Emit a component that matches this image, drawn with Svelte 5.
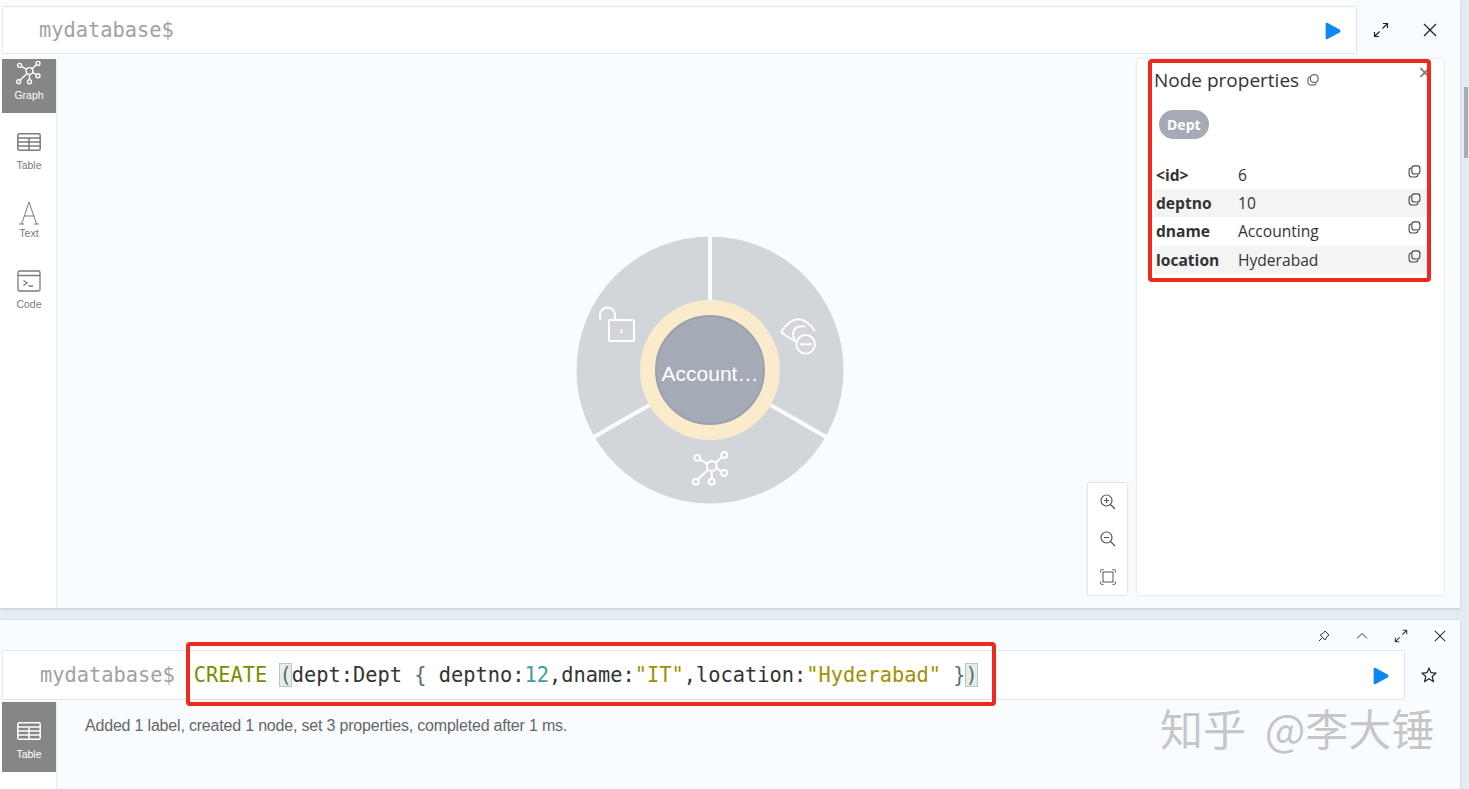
<script>
  // view tabs on the left of the result frame
  const views = [
    { id: 'graph', label: 'Graph', active: true },
    { id: 'table', label: 'Table' },
    { id: 'text', label: 'Text' },
    { id: 'code', label: 'Code' }
  ];

  const props = [
    { key: '<id>', value: '6' },
    { key: 'deptno', value: '10' },
    { key: 'dname', value: 'Accounting' },
    { key: 'location', value: 'Hyderabad' }
  ];
</script>

{#snippet copyIcon(size)}
  <svg class="copy" width={size} height={size} viewBox="0 0 12 12" fill="none" stroke="#444" stroke-width="1">
    <rect x="3.5" y="0.8" width="7.5" height="7.5" rx="2.4" />
    <path d="M3 2.8 A2.2 2.2 0 0 0 1 5 V8.6 A2.4 2.4 0 0 0 3.4 11 H7 A2.2 2.2 0 0 0 9.2 9" />
  </svg>
{/snippet}

{#snippet playIcon()}
  <svg width="16" height="18" viewBox="0 0 16 18"><path d="M.6 2 Q.6 .2 2.2 .8 L14.6 7.4 Q16.4 9 14.6 10.6 L2.2 17.2 Q.6 17.8 .6 16 Z" fill="#0b88f2" /></svg>
{/snippet}

{#snippet expandIcon()}
  <svg width="16" height="16" viewBox="0 0 16 16" fill="none" stroke="#222" stroke-width="1.2"><path d="M9.5 6.5 L14.5 1.5 M10 1.5 H14.5 V6 M6.5 9.5 L1.5 14.5 M1.5 10 V14.5 H6" /></svg>
{/snippet}

{#snippet closeIcon()}
  <svg width="14" height="14" viewBox="0 0 14 14" fill="none" stroke="#222" stroke-width="1.3"><path d="M1 1 L13 13 M13 1 L1 13" /></svg>
{/snippet}

{#snippet graphIcon(color, w)}
  <svg width={w} height={w} viewBox="0 0 26 26" fill="none" stroke={color} stroke-width="1.4">
    <circle cx="13.5" cy="11" r="3.4" />
    <circle cx="3.6" cy="5.4" r="2" /><circle cx="22" cy="3.4" r="2" /><circle cx="22" cy="15.7" r="2" />
    <circle cx="2.6" cy="21.7" r="2" /><circle cx="13.5" cy="21.7" r="2" />
    <path d="M5.3 6.4 L10.6 9.4 M16 8.8 L20.5 4.8 M16.7 12.2 L20.2 14.8 M11 13.4 L4 20.2 M13.5 14.4 V19.7" />
  </svg>
{/snippet}

{#snippet tableIcon(color)}
  <svg width="24" height="18" viewBox="0 0 24 18" fill="none" stroke={color} stroke-width="1.5">
    <rect x="0.8" y="0.8" width="22.4" height="16.4" rx="1.5" />
    <path d="M1 5 H23 M1 9 H23 M1 13 H23 M12 5 V17" />
  </svg>
{/snippet}

{#snippet viewTab(view)}
  <div class="tab {view.id}" class:active={view.active}>
    {#if view.id === 'graph'}
      {@render graphIcon('#fff', 26)}
    {:else if view.id === 'table'}
      {@render tableIcon(view.active ? '#fff' : '#7b7b7b')}
    {:else if view.id === 'text'}
      <svg width="20" height="24" viewBox="0 0 20 24" fill="none" stroke="#7b7b7b" stroke-width="1"><path d="M10 1 L2.6 23 M10 1 L17.6 23 M5 15 H15.2 M0 23 H5 M15 23 H20" /></svg>
    {:else}
      <svg width="24" height="22" viewBox="0 0 24 22" fill="none" stroke="#7b7b7b" stroke-width="1.3">
        <rect x="1" y="1" width="22" height="20" rx="1.5" />
        <path d="M1 5.5 H23 M6.5 10.5 L10 13 L6.5 15.5 M11.5 16 H16" />
      </svg>
    {/if}
    <span>{view.label}</span>
  </div>
{/snippet}

<div class="page">
  <section class="frame top-frame">
    <div class="bar-row">
      <div class="editor">
        <span class="prompt">mydatabase$</span>
        <span class="run">{@render playIcon()}</span>
      </div>
      <div class="bar-actions">
        {@render expandIcon()}
        {@render closeIcon()}
      </div>
    </div>

    <div class="result">
      <nav class="tabs">
        {#each views as view}
          {@render viewTab(view)}
        {/each}
      </nav>

      <div class="canvas">
        <svg class="wheel" width="270" height="270" viewBox="-135 -135 270 270">
          <circle r="133.5" fill="#d2d5da" />
          <path d="M0 -135 V-70 M-60.6 35 L-117 67.5 M60.6 35 L117 67.5" stroke="#f9fcff" stroke-width="4" />
          <circle r="70" fill="#faebcc" />
          <circle r="54" fill="#a5abb6" stroke="#9aa1ac" stroke-width="2" />
          <text y="11" text-anchor="middle" class="node-text">Account…</text>

          <g fill="none" stroke="#fff" stroke-width="2" transform="translate(-111 -63)">
            <rect x="10" y="13" width="25" height="21" rx="1.5" />
            <path d="M1 13 V8 A7.5 7.5 0 0 1 16 8 V13" />
            <path d="M22.5 22 V26" />
          </g>
          <g fill="none" stroke="#fff" stroke-width="1.9">
            <path d="M71 -38 Q88 -63 105 -39" />
            <path d="M71 -38 Q78 -32 87 -28" />
            <path d="M95 -43.5 Q84 -45 83 -36 Q83 -31 87 -28" />
            <circle cx="95.7" cy="-25.7" r="9.3" />
            <path d="M89.5 -25.7 H102" />
          </g>
          <g transform="translate(-18 80)">
            {@render graphIcon('#fff', 38)}
          </g>
        </svg>

        <div class="zoom-box">
          <svg width="16" height="16" viewBox="0 0 16 16" fill="none" stroke="#555" stroke-width="1.2"><circle cx="6.5" cy="6.5" r="5.5" /><path d="M10.5 10.5 L15 15 M4 6.5 H9 M6.5 4 V9" /></svg>
          <svg width="16" height="16" viewBox="0 0 16 16" fill="none" stroke="#555" stroke-width="1.2"><circle cx="6.5" cy="6.5" r="5.5" /><path d="M10.5 10.5 L15 15 M4 6.5 H9" /></svg>
          <svg class="fit" width="16" height="16" viewBox="0 0 16 16" fill="none" stroke="#555" stroke-width="1"><rect x="3" y="3" width="10" height="10" /><path d="M.6 3.5 V1.5 Q.6 .6 1.5 .6 H3.5 M12.5 .6 H14.5 Q15.4 .6 15.4 1.5 V3.5 M15.4 12.5 V14.5 Q15.4 15.4 14.5 15.4 H12.5 M3.5 15.4 H1.5 Q.6 15.4 .6 14.5 V12.5" /></svg>
        </div>
      </div>

      <aside class="inspector">
        <div class="inspector-title">
          <h3>Node properties</h3>
          {@render copyIcon(12)}
          <span class="inspector-close">×</span>
        </div>
        <div class="pill">Dept</div>
        <table>
          <tbody>
            {#each props as row}
              <tr>
                <th>{row.key}</th>
                <td>{row.value}</td>
                <td class="copy-cell">{@render copyIcon(13)}</td>
              </tr>
            {/each}
          </tbody>
        </table>
        <div class="mark mark-props"></div>
      </aside>
    </div>
  </section>

  <section class="frame bottom-frame">
    <div class="frame-tools">
      <svg width="12" height="12" viewBox="0 0 12 12" fill="none" stroke="#333" stroke-width="1"><path d="M7 1 L11 5 L9.8 5.6 L7.6 8.8 Q7.6 9.8 7 10 L2.2 5 Q2.4 4.4 3.4 4.4 L6.4 2.2 Z M4.4 7.6 L1 11" /></svg>
      <svg width="12" height="12" viewBox="0 0 12 12" fill="none" stroke="#333" stroke-width="1"><path d="M1 8.5 L6 3.5 L11 8.5" /></svg>
      <svg width="14" height="14" viewBox="0 0 16 16" fill="none" stroke="#333" stroke-width="1.2"><path d="M9.5 6.5 L14.5 1.5 M10 1.5 H14.5 V6 M6.5 9.5 L1.5 14.5 M1.5 10 V14.5 H6" /></svg>
      <svg width="12" height="12" viewBox="0 0 14 14" fill="none" stroke="#333" stroke-width="1.3"><path d="M1 1 L13 13 M13 1 L1 13" /></svg>
    </div>

    <div class="bar-row lower">
      <div class="editor">
        <span class="prompt">mydatabase$</span>
        <code class="query"><span class="kw">CREATE</span> <span class="bracket">(</span>dept:Dept <span class="dim">&#123;</span> deptno:<span class="num">12</span>,dname:<span class="str">"IT"</span>,location:<span class="str">"Hyderabad"</span> <span class="dim">&#125;</span><span class="bracket">)</span></code>
        <span class="run">{@render playIcon()}</span>
      </div>
      <div class="star">
        <svg width="16" height="16" viewBox="0 0 16 16" fill="none" stroke="#222" stroke-width="1.2"><path d="M8 1.2 L10 5.7 L14.9 6.2 L11.2 9.5 L12.3 14.4 L8 11.8 L3.7 14.4 L4.8 9.5 L1.1 6.2 L6 5.7 Z" /></svg>
      </div>
    </div>

    <div class="result lower-result">
      <nav class="tabs">
        {@render viewTab({ id: 'table', label: 'Table', active: true })}
      </nav>
      <p class="summary">Added 1 label, created 1 node, set 3 properties, completed after 1 ms.</p>
    </div>

    <div class="mark mark-query"></div>
    <div class="watermark">知乎 @李大锤</div>
  </section>

  <div class="scroll-thumb"></div>
</div>

<style>
  :global(body) {
    margin: 0;
    background: #e3ebf3;
  }

  .page {
    position: relative;
    width: 1469px;
    height: 789px;
    overflow: hidden;
    background: #e3ebf3;
    display: flex;
    flex-direction: column;
    gap: 12px;
    font-family: "Liberation Sans", Arial, sans-serif;
  }

  .frame {
    position: relative;
    width: 1460px;
    background: #f9fcff;
    box-shadow: 0 1px 3px rgba(0, 0, 0, 0.14);
    flex: none;
    display: flex;
    flex-direction: column;
  }

  .top-frame {
    height: 608px;
    padding-top: 6px;
    box-sizing: border-box;
  }

  .bottom-frame {
    height: 169px;
  }

  .bar-row {
    display: flex;
    height: 48px;
    padding-left: 2px;
    flex: none;
  }

  .editor {
    flex: 1;
    display: flex;
    align-items: center;
    background: #fff;
    border: 1px solid #dfe5eb;
    border-left-color: #e9edf1;
    border-radius: 2px;
    padding-left: 36px;
    padding-right: 15px;
    font-family: "DejaVu Sans Mono", monospace;
    font-size: 20.35px;
    min-width: 0;
  }

  .lower .editor {
    padding-left: 37px;
  }

  .prompt {
    color: #9ba3a3;
    white-space: pre;
  }

  .run {
    margin-left: auto;
    display: flex;
    margin-top: 2px;
  }

  .bar-actions {
    width: 103px;
    display: flex;
    align-items: center;
    justify-content: flex-end;
    gap: 34px;
    padding-right: 23px;
    box-sizing: border-box;
    flex: none;
  }

  .result {
    flex: 1;
    display: flex;
    min-height: 0;
    padding-top: 5px;
  }

  .tabs {
    width: 54px;
    padding-left: 2px;
    background: #fff;
    border-right: 1px solid #e9edf2;
    flex: none;
  }

  .tab {
    height: 70px;
    display: flex;
    flex-direction: column;
    align-items: center;
    justify-content: flex-start;
    padding-top: 20px;
    gap: 8px;
    box-sizing: border-box;
    color: #7b7b7b;
    font-size: 10.5px;
    line-height: 12px;
  }

  .tab.active {
    background: #868686;
    color: #fff;
  }

  .tab.graph {
    height: 54px;
    gap: 3px;
    padding-top: 1px;
  }

  .tab.text {
    height: 66px;
    padding-top: 18px;
    gap: 2px;
  }

  .tab.code {
    height: 74px;
    padding-top: 21px;
    gap: 6px;
  }

  .canvas {
    position: relative;
    flex: 1;
  }

  .wheel {
    position: absolute;
    left: 518px;
    top: 176px;
  }

  .node-text {
    font-size: 21px;
    fill: #fff;
    font-family: "Liberation Sans", sans-serif;
  }

  .zoom-box {
    position: absolute;
    left: 1031px;
    top: 424px;
    width: 39px;
    height: 112px;
    background: #fff;
    box-shadow: 0 0 2px rgba(0, 0, 0, 0.25);
    display: flex;
    flex-direction: column;
    align-items: center;
    gap: 21px;
    padding-top: 11px;
    box-sizing: border-box;
  }

  .fit {
    margin-top: 1px;
  }

  .inspector {
    position: relative;
    width: 307px;
    flex: none;
    margin-right: 16px;
    margin-bottom: 13px;
    background: #fff;
    box-shadow: 0 0 2px rgba(0, 0, 0, 0.18);
    padding: 0 16px 0 17px;
    box-sizing: border-box;
  }

  .inspector-title {
    display: flex;
    align-items: center;
    height: 42px;
    gap: 8px;
  }

  h3 {
    margin: 0;
    font-family: "Open Sans", sans-serif;
    font-weight: 400;
    font-size: 19px;
    color: #333;
  }

  .inspector-close {
    position: absolute;
    right: 13px;
    top: 2px;
    color: #777;
    font-size: 22px;
    line-height: 24px;
    font-weight: 400;
  }

  .pill {
    display: inline-block;
    margin: 9px 0 0 5px;
    padding: 0 8px;
    height: 29px;
    line-height: 29px;
    border-radius: 15px;
    background: #a5abb6;
    color: #fff;
    font-family: "Open Sans", sans-serif;
    font-size: 14px;
    font-weight: 700;
  }

  table {
    width: 100%;
    margin-top: 22px;
    border-collapse: collapse;
    font-family: "Open Sans", sans-serif;
    font-size: 15.6px;
    color: #333;
  }

  tr {
    height: 28.2px;
  }

  tr:nth-child(even) {
    background: #f4f4f5;
  }

  th {
    text-align: left;
    width: 82px;
    padding: 0 0 0 2px;
    font-weight: 700;
  }

  td {
    padding: 0;
  }

  .copy-cell {
    text-align: right;
    width: 22px;
    vertical-align: top;
    padding-right: 7px;
  }

  .copy {
    display: inline-block;
  }

  .copy-cell .copy {
    margin-top: -3px;
  }

  .mark {
    position: absolute;
    border: 4px solid #ee2a1e;
    border-radius: 4px;
    box-sizing: border-box;
    pointer-events: none;
  }

  .mark-props {
    left: 11px;
    top: 0;
    width: 283px;
    height: 223px;
  }

  .mark-query {
    left: 186px;
    top: 22px;
    width: 810px;
    height: 64px;
  }

  .frame-tools {
    height: 30px;
    padding-top: 2px;
    box-sizing: border-box;
    display: flex;
    align-items: center;
    justify-content: flex-end;
    gap: 26px;
    padding-right: 14px;
    flex: none;
  }

  .bar-row.lower {
    height: 50px;
  }

  .star {
    width: 55px;
    flex: none;
    padding-right: 7px;
    box-sizing: border-box;
    display: flex;
    align-items: center;
    justify-content: center;
  }

  .query {
    margin-left: 19px;
    font-family: "DejaVu Sans Mono", monospace;
    font-size: 20.35px;
    color: #333;
    white-space: pre;
  }

  .kw {
    color: #7f8c00;
  }

  .num {
    color: #3a9f9f;
  }

  .str {
    color: #a39000;
  }

  .dim {
    color: #5e6d6d;
  }

  .bracket {
    color: #5e6d6d;
    background: #e4ede9;
    outline: 1px solid #b9c6c0;
    outline-offset: -1px;
  }

  .lower-result {
    padding-top: 2px;
  }

  .summary {
    margin: 15px 0 0 28px;
    font-size: 16px;
    color: #666;
    letter-spacing: -0.19px;
  }

  .watermark {
    position: absolute;
    left: 1160px;
    top: 75px;
    font-family: "Noto Sans CJK SC", sans-serif;
    font-size: 43px;
    line-height: 64px;
    word-spacing: 9px;
    color: #c4c7ca;
    text-shadow: -1px -1px 0 #fff;
    white-space: nowrap;
  }

  .scroll-thumb {
    position: absolute;
    right: 1px;
    top: 87px;
    width: 4px;
    height: 71px;
    background: #a9acb0;
  }
</style>
